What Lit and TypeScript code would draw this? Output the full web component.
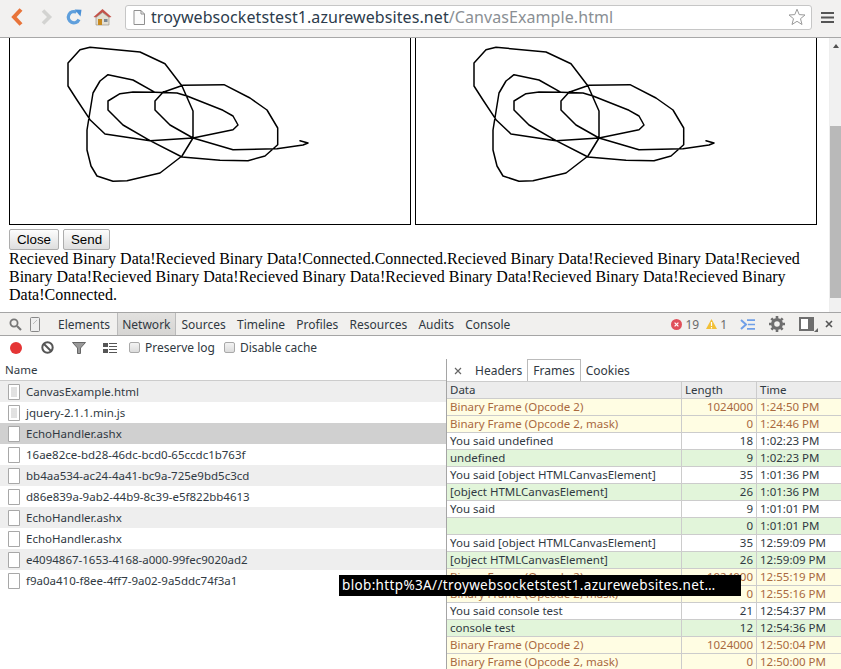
import { LitElement, html, css, svg } from "lit";
import { customElement } from "lit/decorators.js";

const CURVE = "M300 137.7 L308 140 L303 142 L277 145.7 L233 146.7 L193 135 L150 137.7 L105 131 L90 116.7 L77 97 L68 83 L68 60 L80 46.7 L90 44.3 L140 49 L165 60.7 L182 83 L193 108 L193 135 L182 153 L160 170 L127 177.7 L113 178.3 L97 173 L91 163 L87 147 L87 127 L93 90 L100 78 L108 71.7 L133 77 L155 89.3 L133 89 L120 90.7 L108 98 L108 107 L123 122 L150 137.7 L182 154 L220 157.3 L248 157.7 L265 153 L277.7 141.7 L277.7 125 L267 107 L250 95 L224 81.7 L183 82.3 L163 89.3 L155 98 L155 107 L170 122 L193 135 L233 126.7 L238 122 L233 113 L223 107.3 L187 93 L177 90 L155 89.3";

const FILES: [string, string, string][] = [
  ["CanvasExample.html", "doc", "alt"],
  ["jquery-2.1.1.min.js", "doc", ""],
  ["EchoHandler.ashx", "blank", "sel"],
  ["16ae82ce-bd28-46dc-bcd0-65ccdc1b763f", "blank", ""],
  ["bb4aa534-ac24-4a41-bc9a-725e9bd5c3cd", "blank", "alt"],
  ["d86e839a-9ab2-44b9-8c39-e5f822bb4613", "blank", ""],
  ["EchoHandler.ashx", "blank", "alt"],
  ["EchoHandler.ashx", "blank", ""],
  ["e4094867-1653-4168-a000-99fec9020ad2", "blank", "alt"],
  ["f9a0a410-f8ee-4ff7-9a02-9a5ddc74f3a1", "blank", ""],
];

const B = "Binary Frame (Opcode 2)";
const M = "Binary Frame (Opcode 2, mask)";
const O = "[object HTMLCanvasElement]";
const FRAMES: [string, string, string, string][] = [
  [B, "1024000", "1:24:50 PM", "bin"],
  [M, "0", "1:24:46 PM", "bin"],
  ["You said undefined", "18", "1:02:23 PM", ""],
  ["undefined", "9", "1:02:23 PM", "txt"],
  ["You said " + O, "35", "1:01:36 PM", ""],
  [O, "26", "1:01:36 PM", "txt"],
  ["You said", "9", "1:01:01 PM", ""],
  ["", "0", "1:01:01 PM", "txt"],
  ["You said " + O, "35", "12:59:09 PM", ""],
  [O, "26", "12:59:09 PM", "txt"],
  [B, "1024000", "12:55:19 PM", "bin"],
  [M, "0", "12:55:16 PM", "bin"],
  ["You said console test", "21", "12:54:37 PM", ""],
  ["console test", "12", "12:54:36 PM", "txt"],
  [B, "1024000", "12:50:04 PM", "bin"],
  [M, "0", "12:50:00 PM", "bin"],
];

@customElement("app-root")
export class AppRoot extends LitElement {
  static styles = css`
    :host { display: block; width: 841px; height: 669px; overflow: hidden; position: relative; background: #fff; font-family: "Noto Sans", sans-serif; color: #303942; }
    svg { display: block; flex: none; }
    .chrome { height: 34px; background: #f2f1f0; border-bottom: 1px solid #a8a8a8; display: flex; align-items: center; padding: 0 0 3px 0; box-sizing: content-box; }
    .nav { display: flex; align-items: center; width: 125px; flex: none; }
    .nav svg:nth-child(1) { margin-left: 10px; }
    .nav svg:nth-child(2) { margin-left: 15px; }
    .nav svg:nth-child(3) { margin-left: 13px; }
    .nav svg:nth-child(4) { margin-left: 11px; }
    .url { width: 687px; height: 25px; box-sizing: border-box; flex: none; background: #fff; border: 1px solid #c6c6c6; border-radius: 3px; display: flex; align-items: center; padding: 0 5px 0 7px; font-size: 16px; letter-spacing: 0.08px; }
    .url b { font-weight: 400; color: #2c3c4c; margin-left: 6px; white-space: nowrap; }
    .url span { color: #8a8f94; }
    .url .sp { flex: 1; }
    .ham { margin-left: 9px; }
    .page { height: 274px; display: flex; }
    .main { width: 829px; flex: none; padding-left: 9px; box-sizing: border-box; }
    .canvases { display: flex; gap: 4px; }
    .canvas { width: 402px; height: 187px; box-sizing: border-box; border: 1px solid #000; border-top: 0; background: #fff; }
    .btns { display: flex; gap: 4px; margin-top: 4px; height: 21px; }
    .btns button { font: 13.33px "Liberation Sans", sans-serif; color: #000; height: 21px; padding: 0; margin: 0; border: 1px solid #adadad; border-radius: 2px; background: linear-gradient(#fdfdfd, #dedede); }
    .b1 { width: 50px; }
    .b2 { width: 47px; }
    .log { font: 16px/18px "Liberation Serif", serif; color: #000; width: 800px; }
    .sbar { width: 12px; flex: none; background: #f1f1f1; border-left: 1px solid #eee; box-sizing: border-box; display: flex; flex-direction: column; align-items: center; }
    .sbar .up { margin-top: 6px; width: 0; height: 0; border: 3px solid transparent; border-bottom: 4px solid #505050; border-top: 0; }
    .sbar .thumb { margin-top: 78px; width: 100%; height: 172px; background: #b9b9b9; }
    .dt { height: 22px; background: #f1f0ee; border-top: 1px solid #a5a5a5; border-bottom: 1px solid #a5a5a5; display: flex; align-items: center; font-size: 12px; color: #303942; }
    .dt svg.s { margin-left: 9px; }
    .dt svg.m { margin-left: 8px; }
    .tabs { display: flex; margin-left: 13px; align-items: center; height: 100%; }
    .tab { padding: 0 5px; height: 100%; display: flex; align-items: center; margin-right: 1.2px; white-space: nowrap; }
    .tab.on { background: linear-gradient(#e2e1df, #d6d5d3); box-shadow: inset 1px 0 0 #bbb, inset -1px 0 0 #bbb; margin: 0 1px; }
    .sp { flex: 1; }
    .stat { display: flex; align-items: center; gap: 3px; color: #6a6a6a; margin-right: 7px; }
    .body { display: flex; height: 336px; }
    .left { width: 446px; flex: none; }
    .tools { height: 23px; display: flex; align-items: center; font-size: 12px; }
    .tools svg { margin-right: 0; }
    .chk { display: inline-block; width: 9px; height: 9px; border: 1px solid #a9a9a9; border-radius: 2px; background: linear-gradient(#f3f3f3, #dcdcdc); margin-right: 5px; flex: none; }
    .name { height: 22px; box-sizing: border-box; border-bottom: 1px solid #ccc; font-size: 11.5px; line-height: 21px; padding-left: 5px; }
    .file { height: 21px; display: flex; align-items: center; font-size: 11.5px; padding-left: 7px; gap: 5px; white-space: nowrap; }
    .file.alt { background: #eee; }
    .file.sel { background: #d0d0d0; }
    .right { width: 395px; flex: none; border-left: 1px solid #a5a5a5; box-sizing: border-box; margin-top: 23px; height: 313px; display: flex; flex-direction: column; }
    .dtabs { height: 22px; display: flex; align-items: flex-end; font-size: 12px; position: relative; }
    .dtabs .x { margin: 0 0 6px 7px; }
    .dtabs .t { height: 100%; display: flex; align-items: center; padding: 0 5px; box-sizing: border-box; white-space: nowrap; }
    .dtabs .t.on { background: #fff; border: 1px solid #bbb; border-bottom: 0; margin: 0 0 0 0; }
    .row { display: grid; grid-template-columns: 235px 75px 1fr; height: 17px; box-sizing: border-box; border-bottom: 1px solid #ccc; font-size: 11.5px; line-height: 16px; white-space: nowrap; }
    .row > div { padding: 0 3px; box-sizing: border-box; overflow: hidden; border-right: 1px solid #ccc; }
    .row > div:last-child { border-right: 0; }
    .row .n { text-align: right; }
    .row.head { background: #ececec; border-top: 1px solid #ccc; height: 18px; }
    .row.bin { background: #fffde3; color: #a9693f; }
    .row.txt { background: #e2f5da; }
    .tip { position: absolute; left: 339px; top: 575px; width: 402px; height: 21px; background: #000; color: #fff; font-size: 13.5px; line-height: 20px; padding-left: 3px; box-sizing: border-box; white-space: nowrap; overflow: hidden; letter-spacing: 0.35px; }
  `;

  private fileIcon(kind: string) {
    return html`<svg width="14" height="16" viewBox="0 0 14 16">
      <path d="M1.5 .5H12.5V15.5H1.5Z" fill="#fff" stroke="#a8a8a8"/>
      ${kind === "doc"
        ? svg`<path d="M4 4H10M4 6H10M4 8H10M4 10H10M4 12H10" stroke="#c4c4c4"/>`
        : ""}
    </svg>`;
  }

  private drawing() {
    return html`<svg width="400" height="186" viewBox="10 35 400 186">
      <path d="${CURVE}" fill="none" stroke="#000" stroke-width="1.5" stroke-linejoin="round" stroke-linecap="round"/>
    </svg>`;
  }

  render() {
    return html`
      <div class="chrome">
        <div class="nav">
          <svg width="15" height="18" viewBox="0 0 15 18"><path d="M11 1.5L4 9L11 16.5" fill="none" stroke="#e8743a" stroke-width="4"/></svg>
          <svg width="13" height="18" viewBox="0 0 13 18"><path d="M3 2.5L9.5 9L3 15.5" fill="none" stroke="#d3d3d1" stroke-width="3.6"/></svg>
          <svg width="16" height="16" viewBox="0 0 16 16"><path d="M13 10.5A5.6 5.6 0 1 1 10.5 3.2" fill="none" stroke="#5f9fdc" stroke-width="3.2"/><path d="M8.6 0.5L15.5 0.8L14.5 7.5Z" fill="#4a90d6"/></svg>
          <svg width="19" height="18" viewBox="0 0 19 18"><path d="M9.5 1L0.5 9L3 9.6L9.5 4.5L16 9.6L18.5 9L9.5 1Z" fill="#c4524a"/><path d="M3 9.5L9.5 4.5L16 9.5V17H3Z" fill="#e3dfd3" stroke="#8d8678" stroke-width=".6"/><rect x="5" y="11" width="4" height="6" fill="#c98a1e"/><rect x="11" y="11" width="3.5" height="3" fill="#7b8792"/></svg>
        </div>
        <div class="url">
          <svg width="12" height="15" viewBox="0 0 12 15"><path d="M1 .5H8L11.5 4V14.5H1Z" fill="#fbfbfb" stroke="#8f8f8f"/><path d="M8 .5V4H11.5" fill="none" stroke="#8f8f8f"/></svg>
          <b>troywebsocketstest1.azurewebsites.net<span>/CanvasExample.html</span></b>
          <div class="sp"></div>
          <svg width="18" height="18" viewBox="0 0 18 18"><path d="M9 1.2L11.2 6.6L17 7L12.5 10.7L14 16.5L9 13.3L4 16.5L5.5 10.7L1 7L6.8 6.6Z" fill="#fff" stroke="#9a9a9a"/></svg>
        </div>
        <svg class="ham" width="13" height="13" viewBox="0 0 13 13"><path d="M0 2H13M0 6.5H13M0 11H13" stroke="#555" stroke-width="2.2"/></svg>
      </div>

      <div class="page">
        <div class="main">
          <div class="canvases">
            <div class="canvas">${this.drawing()}</div>
            <div class="canvas">${this.drawing()}</div>
          </div>
          <div class="btns"><button class="b1">Close</button><button class="b2">Send</button></div>
          <div class="log">Recieved Binary Data!Recieved Binary Data!Connected.Connected.Recieved Binary Data!Recieved Binary Data!Recieved Binary Data!Recieved Binary Data!Recieved Binary Data!Recieved Binary Data!Recieved Binary Data!Recieved Binary Data!Connected.</div>
        </div>
        <div class="sbar"><div class="up"></div><div class="thumb"></div></div>
      </div>

      <div class="dt">
        <svg class="s" width="13" height="13" viewBox="0 0 13 13"><circle cx="5" cy="5" r="3.6" fill="none" stroke="#777" stroke-width="1.8"/><path d="M8 8L12 12" stroke="#777" stroke-width="2.2"/></svg>
        <svg class="m" width="10" height="15" viewBox="0 0 10 15"><rect x=".5" y=".5" width="9" height="14" rx="1" fill="#eee" stroke="#888"/><path d="M3 7L7 3" stroke="#bbb"/></svg>
        <div class="tabs">
          <div class="tab">Elements</div>
          <div class="tab on">Network</div>
          <div class="tab">Sources</div>
          <div class="tab">Timeline</div>
          <div class="tab">Profiles</div>
          <div class="tab">Resources</div>
          <div class="tab">Audits</div>
          <div class="tab">Console</div>
        </div>
        <div class="sp"></div>
        <div class="stat">
          <svg width="11" height="11" viewBox="0 0 11 11"><circle cx="5.5" cy="5.5" r="5.5" fill="#e0505a"/><path d="M3.6 3.6L7.4 7.4M7.4 3.6L3.6 7.4" stroke="#fff" stroke-width="1.2"/></svg>19
        </div>
        <div class="stat">
          <svg width="11" height="10" viewBox="0 0 11 10"><path d="M5.5 0L11 10H0Z" fill="#f2c037"/><path d="M5.5 3V7M5.5 8V9.4" stroke="#fff" stroke-width="1.2"/></svg>1
        </div>
        <svg style="margin-left:6px" width="15" height="11" viewBox="0 0 15 11"><path d="M1 1L6 5.5L1 10" fill="none" stroke="#6f9fe8" stroke-width="2"/><path d="M7 1.2H15M8 5.5H15M7 9.8H15" stroke="#6f9fe8" stroke-width="1.7"/></svg>
        <svg style="margin-left:14px" width="16" height="16" viewBox="0 0 16 16"><circle cx="8" cy="8" r="4.4" fill="none" stroke="#6e6e6e" stroke-width="3.2"/><path d="M8 0V16M0 8H16M2.3 2.3L13.7 13.7M13.7 2.3L2.3 13.7" stroke="#6e6e6e" stroke-width="2.6" stroke-dasharray="2.6 10.8 2.6"/></svg>
        <svg style="margin-left:14px" width="20" height="15" viewBox="0 0 20 15"><rect x="1" y="1" width="13" height="12" fill="#fff" stroke="#6e6e6e" stroke-width="2"/><rect x="9" y="1" width="5" height="12" fill="#6e6e6e"/><path d="M19 11V15H15Z" fill="#666"/></svg>
        <svg style="margin:0 8px 0 6px" width="8" height="8" viewBox="0 0 8 8"><path d="M1 1L7 7M7 1L1 7" stroke="#555" stroke-width="1.6"/></svg>
      </div>

      <div class="body">
        <div class="left">
          <div class="tools">
            <svg style="margin-left:10px" width="12" height="12" viewBox="0 0 12 12"><circle cx="6" cy="6" r="6" fill="#e53535"/></svg>
            <svg style="margin-left:19px" width="13" height="13" viewBox="0 0 13 13"><circle cx="6.5" cy="6.5" r="5.2" fill="none" stroke="#555" stroke-width="2"/><path d="M3 3L10 10" stroke="#555" stroke-width="2"/></svg>
            <svg style="margin-left:18px" width="14" height="12" viewBox="0 0 14 12"><path d="M.5 .5H13.5L8.5 6V11.5H5.5V6Z" fill="#999" stroke="#666"/></svg>
            <svg style="margin-left:17px" width="14" height="10" viewBox="0 0 14 10"><path d="M0 0H5V4H0ZM0 6H5V10H0Z" fill="#555"/><path d="M6 .5H14M6 3.5H14M6 6.5H14M6 9.5H14" stroke="#555"/></svg>
            <span class="chk" style="margin-left:12px"></span>Preserve log
            <span class="chk" style="margin-left:9px"></span>Disable cache
          </div>
          <div class="name">Name</div>
          ${FILES.map(([n, k, c]) => html`<div class="file ${c}">${this.fileIcon(k)}<span>${n}</span></div>`)}
        </div>
        <div class="right">
          <div class="dtabs">
            <svg class="x" width="8" height="8" viewBox="0 0 8 8"><path d="M1 1L7 7M7 1L1 7" stroke="#666" stroke-width="1.2"/></svg>
            <div class="t" style="margin-left:8px">Headers</div>
            <div class="t on">Frames</div>
            <div class="t">Cookies</div>
          </div>
          <div class="row head"><div>Data</div><div>Length</div><div>Time</div></div>
          ${FRAMES.map(([d, l, t, c]) => html`<div class="row ${c}"><div>${d}</div><div class="n">${l}</div><div>${t}</div></div>`)}
        </div>
      </div>

      <div class="tip">blob:http%3A//troywebsocketstest1.azurewebsites.net…</div>
    `;
  }
}
